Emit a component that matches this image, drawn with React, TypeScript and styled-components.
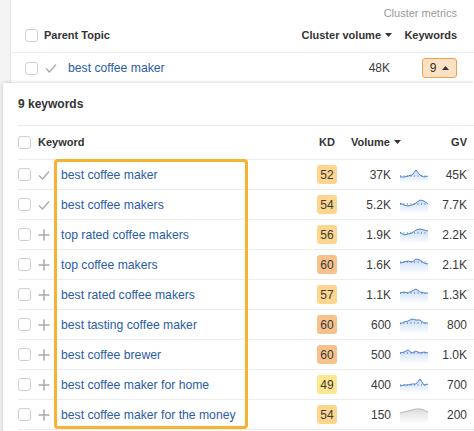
import React from "react";
import styled, { createGlobalStyle } from "styled-components";

const GlobalStyle = createGlobalStyle`
  html, body {
    margin: 0;
    padding: 0;
    background: #f4f4f4;
    overflow: hidden;
  }
  body {
    font-family: "Liberation Sans", Arial, sans-serif;
    color: #333333;
  }
`;

type Row = {
  keyword: string;
  added: boolean;
  kd: number;
  volume: string;
  gv: string;
  spark: number[];
  dotY: number;
  muted?: boolean;
};

const rows: Row[] = [
  { keyword: "best coffee maker", added: true, kd: 52, volume: "37K", gv: "45K", spark: [11, 11, 10, 9, 4, 9, 11, 10], dotY: 10 },
  { keyword: "best coffee makers", added: true, kd: 54, volume: "5.2K", gv: "7.7K", spark: [7, 9, 10, 9, 7, 4, 5, 8], dotY: 8 },
  { keyword: "top rated coffee makers", added: false, kd: 56, volume: "1.9K", gv: "2.2K", spark: [6, 9, 8, 7, 4, 3, 4, 5], dotY: 7 },
  { keyword: "top coffee makers", added: false, kd: 60, volume: "1.6K", gv: "2.1K", spark: [7, 6, 5, 6, 3, 4, 7, 8], dotY: 6 },
  { keyword: "best rated coffee makers", added: false, kd: 57, volume: "1.1K", gv: "1.3K", spark: [7, 6, 7, 5, 3, 6, 7, 7], dotY: 7 },
  { keyword: "best tasting coffee maker", added: false, kd: 60, volume: "600", gv: "800", spark: [8, 6, 5, 3, 4, 4, 7, 7], dotY: 7 },
  { keyword: "best coffee brewer", added: false, kd: 60, volume: "500", gv: "1.0K", spark: [7, 6, 4, 7, 5, 7, 6, 7], dotY: 7 },
  { keyword: "best coffee maker for home", added: false, kd: 49, volume: "400", gv: "700", spark: [10, 9, 9, 8, 8, 3, 9, 8], dotY: 9 },
  { keyword: "best coffee maker for the money", added: false, kd: 54, volume: "150", gv: "200", spark: [7, 6, 5, 4, 3, 3, 4, 6], dotY: 0, muted: true },
];

const kdColor = (kd: number) => {
  if (kd >= 60) return "#f7c18c";
  if (kd >= 50) return "#fdd58c";
  return "#fde68e";
};

const Page = styled.div`
  width: 474px;
  height: 431px;
`;

const TopTable = styled.div`
  margin-left: 10px;
  background: #ffffff;
  border-left: 1px solid #e4e4e4;
`;

const MetricsLabel = styled.div`
  height: 26px;
  display: flex;
  align-items: center;
  justify-content: flex-end;
  padding-right: 17px;
  font-size: 11px;
  color: #9a9a9a;
`;

const TopGrid = styled.div<{ $header?: boolean }>`
  display: grid;
  grid-template-columns: 19px 1fr 120px 65px;
  align-items: center;
  padding: ${(p) => (p.$header ? "0 17px 8px 14px" : "0 17px 0 14px")};
  height: ${(p) => (p.$header ? "18px" : "30px")};
  border-bottom: ${(p) => (p.$header ? "1px solid #ececec" : "none")};
`;

const HeadCell = styled.div<{ $align?: string }>`
  font-size: 11px;
  font-weight: bold;
  color: #333333;
  white-space: nowrap;
  display: flex;
  align-items: center;
  justify-content: ${(p) => p.$align || "flex-start"};
  gap: 4px;
`;

const Checkbox = styled.span`
  display: block;
  width: 11px;
  height: 11px;
  border: 1px solid #cfcfcf;
  border-radius: 3px;
  background: #ffffff;
`;

const TopicCell = styled.div`
  display: flex;
  align-items: center;
  gap: 11px;
  padding-left: 1px;
`;

const LinkText = styled.span`
  font-size: 12.2px;
  color: #2a5ba7;
  white-space: nowrap;
`;

const NumCell = styled.div<{ $pad?: number }>`
  font-size: 12px;
  color: #3a3a3a;
  text-align: right;
  padding-right: ${(p) => p.$pad || 0}px;
`;

const CountBadge = styled.div`
  justify-self: end;
  width: 33px;
  height: 18px;
  box-sizing: content-box;
  border: 1px solid #f3a14c;
  border-radius: 3px;
  background: #fde1c4;
  display: flex;
  align-items: center;
  justify-content: center;
  gap: 6px;
  font-size: 12px;
  color: #333333;
`;

const Panel = styled.div`
  position: relative;
  margin-left: 3px;
  background: #ffffff;
  box-shadow: 0 0 4px rgba(0, 0, 0, 0.22);
  padding-left: 15px;
  height: 360px;
`;

const PanelTitle = styled.div`
  height: 42px;
  display: flex;
  align-items: center;
  font-size: 12px;
  font-weight: bold;
  color: #333333;
  border-bottom: 1px solid #ececec;
`;

const KwGrid = styled.div<{ $header?: boolean }>`
  display: grid;
  grid-template-columns: 20px 23px 1fr 40px 44px 42px 34px;
  align-items: center;
  height: ${(p) => (p.$header ? "32px" : "29px")};
  padding: ${(p) => (p.$header ? "0 7px 1px 0" : "0 7px 0 0")};
  border-bottom: 1px solid #ececec;
`;

const KdBadge = styled.span<{ $bg: string }>`
  justify-self: center;
  width: 20px;
  height: 19px;
  border-radius: 3px;
  background: ${(p) => p.$bg};
  display: flex;
  align-items: center;
  justify-content: center;
  font-size: 12px;
  color: #3a3a3a;
`;

const SparkCell = styled.div`
  padding-left: 9px;
  display: flex;
  align-items: center;
`;

const KeywordHead = styled(HeadCell)`
  grid-column: span 2;
`;

const VolumeHead = styled(HeadCell)`
  grid-column: span 2;
  padding-left: 4px;
`;

const Highlight = styled.div`
  position: absolute;
  left: 51px;
  top: 76px;
  width: 188px;
  height: 264px;
  border: 3px solid #f8b232;
  border-radius: 4px;
  pointer-events: none;
`;

const Caret = ({ up }: { up?: boolean }) => (
  <svg width="7" height="4" viewBox="0 0 7 4">
    <path d={up ? "M0 4 L3.5 0 L7 4 Z" : "M0 0 L3.5 4 L7 0 Z"} fill="#333" />
  </svg>
);

const CheckIcon = () => (
  <svg width="12" height="12" viewBox="0 0 12 12">
    <path d="M1 6.5 L4.5 10 L11 2.5" fill="none" stroke="#a9a9a9" strokeWidth="1.3" />
  </svg>
);

const PlusIcon = () => (
  <svg width="12" height="12" viewBox="0 0 12 12">
    <path d="M6 0.5 V11.5 M0.5 6 H11.5" fill="none" stroke="#a9a9a9" strokeWidth="1.5" />
  </svg>
);

const Sparkline = ({ values, dotY, muted, id }: { values: number[]; dotY: number; muted?: boolean; id: string }) => {
  const step = 28 / (values.length - 1);
  const pts = values.map((v, i) => `${(i * step).toFixed(1)},${v}`);
  const line = "M" + pts.join(" L");
  const area = `${line} L28,18 L0,18 Z`;
  const stroke = muted ? "#b5b5b5" : "#4f81cf";
  const fill = muted ? "#d9d9d9" : "#c4d8f5";
  return (
    <svg width="28" height="18" viewBox="0 0 28 18">
      <defs>
        <linearGradient id={id} x1="0" y1="0" x2="0" y2="1">
          <stop offset="0" stopColor={fill} stopOpacity="0.9" />
          <stop offset="1" stopColor={fill} stopOpacity="0" />
        </linearGradient>
      </defs>
      <path d={area} fill={`url(#${id})`} />
      {!muted && (
        <line x1="0" y1={dotY} x2="28" y2={dotY} stroke="#2f5fb0" strokeWidth="1.1" strokeDasharray="1 2.5" />
      )}
      <path d={line} fill="none" stroke={stroke} strokeWidth="1" />
    </svg>
  );
};

export default function App() {
  return (
    <Page>
      <GlobalStyle />
      <TopTable>
        <MetricsLabel>Cluster metrics</MetricsLabel>
        <TopGrid $header>
          <Checkbox />
          <HeadCell>Parent Topic</HeadCell>
          <HeadCell $align="flex-end">
            Cluster volume <Caret />
          </HeadCell>
          <HeadCell $align="flex-end">Keywords</HeadCell>
        </TopGrid>
        <TopGrid>
          <Checkbox />
          <TopicCell>
            <CheckIcon />
            <LinkText>best coffee maker</LinkText>
          </TopicCell>
          <NumCell $pad={2}>48K</NumCell>
          <CountBadge>
            9 <Caret up />
          </CountBadge>
        </TopGrid>
      </TopTable>
      <Panel>
        <PanelTitle>9 keywords</PanelTitle>
        <KwGrid $header>
          <Checkbox />
          <KeywordHead>Keyword</KeywordHead>
          <HeadCell $align="center">KD</HeadCell>
          <VolumeHead>
            Volume <Caret />
          </VolumeHead>
          <HeadCell $align="flex-end">GV</HeadCell>
        </KwGrid>
        {rows.map((r, i) => (
          <KwGrid key={r.keyword}>
            <Checkbox />
            {r.added ? <CheckIcon /> : <PlusIcon />}
            <LinkText>{r.keyword}</LinkText>
            <KdBadge $bg={kdColor(r.kd)}>{r.kd}</KdBadge>
            <NumCell>{r.volume}</NumCell>
            <SparkCell>
              <Sparkline values={r.spark} dotY={r.dotY} muted={r.muted} id={`spark-${i}`} />
            </SparkCell>
            <NumCell>{r.gv}</NumCell>
          </KwGrid>
        ))}
        <Highlight />
      </Panel>
    </Page>
  );
}
